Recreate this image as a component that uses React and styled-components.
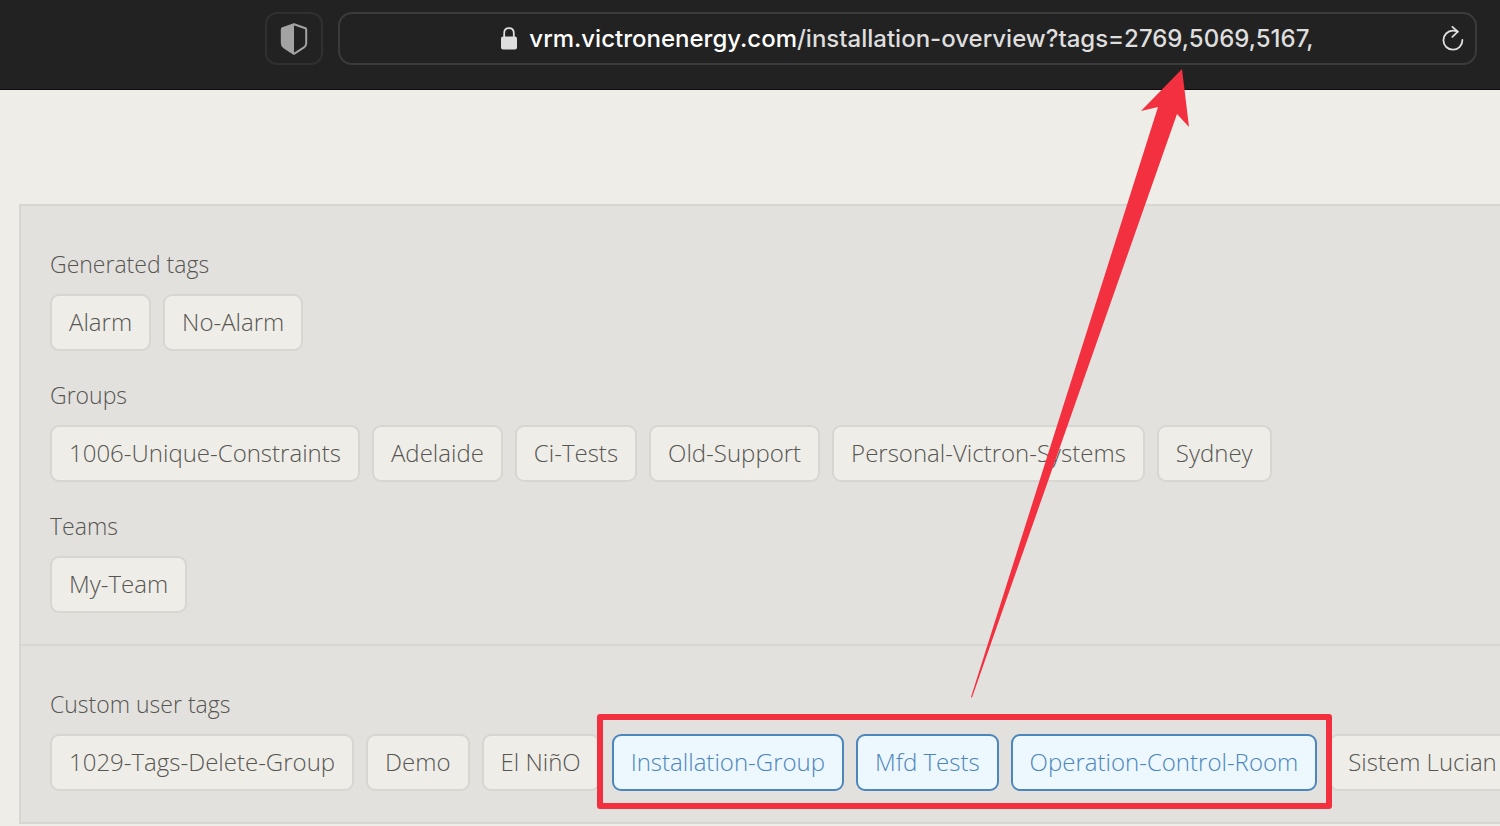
import React from "react";
import styled, { createGlobalStyle } from "styled-components";

const colors = {
  bar: "#222222",
  page: "#eeede8",
  panel: "#e2e1de",
  line: "#d7d6d2",
  text: "#575652",
  blue: "#4c86bb",
  blueBackground: "#ecf7fe",
  red: "#f33040"
};

const generatedTags = ["Alarm", "No-Alarm"];
const groups = [
  "1006-Unique-Constraints",
  "Adelaide",
  "Ci-Tests",
  "Old-Support",
  "Personal-Victron-Systems",
  "Sydney"
];
const teams = ["My-Team"];
const customTags = ["1029-Tags-Delete-Group", "Demo", "El NiñO"];
const selectedTags = ["Installation-Group", "Mfd Tests", "Operation-Control-Room"];
const moreTags = ["Sistem Lucian"];

function Tags({ names, selected = false }) {
  return names.map(name => (
    <Tag key={name} type="button" aria-pressed={selected} $selected={selected}>
      {name}
    </Tag>
  ));
}

function TagGroup({ title, children }) {
  return (
    <Group>
      <GroupTitle>{title}</GroupTitle>
      <TagRow>{children}</TagRow>
    </Group>
  );
}

function ShieldIcon() {
  return (
    <svg width="28" height="32" viewBox="0 0 28 32" aria-hidden="true">
      <path
        d="M14 1.2 25.4 5.2Q26.2 5.5 26.2 6.4V20.2Q26.2 22.8 24 24.4L14 30.8 4 24.4Q1.8 22.8 1.8 20.2V6.4Q1.8 5.5 2.6 5.2Z"
        fill="none"
        stroke="#a3a3a3"
        strokeWidth="2"
        strokeLinejoin="round"
      />
      <path
        d="M14 1.2V30.8L4 24.4Q1.8 22.8 1.8 20.2V6.4Q1.8 5.5 2.6 5.2Z"
        fill="#a3a3a3"
      />
    </svg>
  );
}

function LockIcon() {
  return (
    <svg width="16" height="23" viewBox="0 0 16 23" aria-hidden="true">
      <path
        d="M3.2 11V6.2C3.2 3 5.1 1.2 8 1.2S12.8 3 12.8 6.2V11"
        fill="none"
        stroke="#dedede"
        strokeWidth="1.8"
      />
      <rect x="0" y="9.6" width="16" height="13" rx="2" fill="#dedede" />
    </svg>
  );
}

function ReloadIcon() {
  return (
    <svg
      width="22"
      height="26"
      viewBox="0 0 22 26"
      fill="none"
      stroke="#dedede"
      strokeWidth="1.8"
      strokeLinecap="round"
      strokeLinejoin="round"
      aria-hidden="true"
    >
      <path d="M20.4 14A9.5 9.5 0 1 1 10.9 4.7Q13 4.7 15.6 5.6" />
      <path d="M10.4 0.9 15.8 5.7 10.4 10.9" />
    </svg>
  );
}

export default function App() {
  return (
    <Page>
      <GlobalStyle />
      <Toolbar>
        <ShieldButton type="button" aria-label="Privacy report">
          <ShieldIcon />
        </ShieldButton>
        <AddressBar>
          <Address type="button">
            <LockIcon />
            <span>
              <Domain>vrm.victronenergy.com</Domain>
              /installation-overview?tags=2769,5069,5167,
            </span>
          </Address>
          <ReloadButton type="button" aria-label="Reload">
            <ReloadIcon />
          </ReloadButton>
        </AddressBar>
      </Toolbar>
      <Panel>
        <Section>
          <TagGroup title="Generated tags">
            <Tags names={generatedTags} />
          </TagGroup>
          <TagGroup title="Groups">
            <Tags names={groups} />
          </TagGroup>
          <TagGroup title="Teams">
            <Tags names={teams} />
          </TagGroup>
        </Section>
        <Section>
          <TagGroup title="Custom user tags">
            <Tags names={customTags} />
            <Highlight>
              <Tags names={selectedTags} selected />
            </Highlight>
            <Tags names={moreTags} />
          </TagGroup>
        </Section>
      </Panel>
      <Arrow width="230" height="640" viewBox="0 0 230 640" aria-hidden="true">
        <path
          d="M222 9 229 67 217 54 12 637.5 11 637 198 47 181 51Z"
          fill={colors.red}
        />
      </Arrow>
    </Page>
  );
}

const GlobalStyle = createGlobalStyle`
  * {
    box-sizing: border-box;
  }

  body {
    margin: 0;
    background: ${colors.page};
  }

  button {
    margin: 0;
    padding: 0;
    border: 0;
    background: none;
    font: inherit;
    color: inherit;
    cursor: pointer;
  }
`;

const Page = styled.div`
  position: relative;
  min-height: 100vh;
  overflow: hidden;
  color: ${colors.text};
  font-family: "Open Sans", "Noto Sans", sans-serif;
  font-size: 24px;
  font-weight: 300;
`;

const Toolbar = styled.header`
  display: flex;
  gap: 15px;
  height: 90px;
  padding: 12px 23px 24px 265px;
  background: ${colors.bar};
  border-bottom: 1px solid #0c0c0c;
`;

const ShieldButton = styled.button`
  display: flex;
  flex: none;
  align-items: center;
  justify-content: center;
  width: 58px;
  border: 2px solid #303030;
  border-radius: 12px;
`;

const AddressBar = styled.div`
  display: flex;
  flex: 1;
  align-items: center;
  padding: 0 11px 0 33px;
  border: 2px solid #3b3b3b;
  border-radius: 14px;
`;

const Address = styled.button`
  display: flex;
  flex: 1;
  align-items: center;
  justify-content: center;
  gap: 12px;
  color: #dedede;
  font-family: Inter, "Liberation Sans", sans-serif;
  font-size: 24px;
  font-weight: 500;
  line-height: 32px;
  white-space: nowrap;
`;

const Domain = styled.span`
  color: #ffffff;
`;

const ReloadButton = styled.button`
  display: flex;
  flex: none;
`;

const Panel = styled.main`
  margin: 114px 0 0 19px;
  background: ${colors.panel};
  border: 2px solid ${colors.line};
  border-right: 0;
`;

const Section = styled.section`
  display: flex;
  flex-direction: column;
  gap: 29px;
  padding: 43px 0 31px 29px;

  & + & {
    border-top: 2px solid ${colors.line};
  }
`;

const Group = styled.div`
  display: flex;
  flex-direction: column;
  gap: 15px;
`;

const GroupTitle = styled.h2`
  margin: 0;
  font-size: 23px;
  font-weight: 300;
  line-height: 30px;
`;

const TagRow = styled.div`
  display: flex;
  gap: 12px;
`;

const Tag = styled.button`
  flex: none;
  height: 57px;
  padding: 0 17px 2px;
  border: 2px solid ${props => (props.$selected ? colors.blue : colors.line)};
  border-radius: 9px;
  background: ${props => (props.$selected ? colors.blueBackground : colors.page)};
  color: ${props => (props.$selected ? colors.blue : colors.text)};
  white-space: nowrap;
`;

const Highlight = styled.div`
  position: relative;
  display: flex;
  flex: none;
  gap: 12px;

  &::after {
    content: "";
    position: absolute;
    inset: -20px -15px -18px;
    border: 6px solid ${colors.red};
    border-radius: 3px;
    pointer-events: none;
  }
`;

const Arrow = styled.svg`
  position: absolute;
  top: 60px;
  left: 960px;
  pointer-events: none;
`;
